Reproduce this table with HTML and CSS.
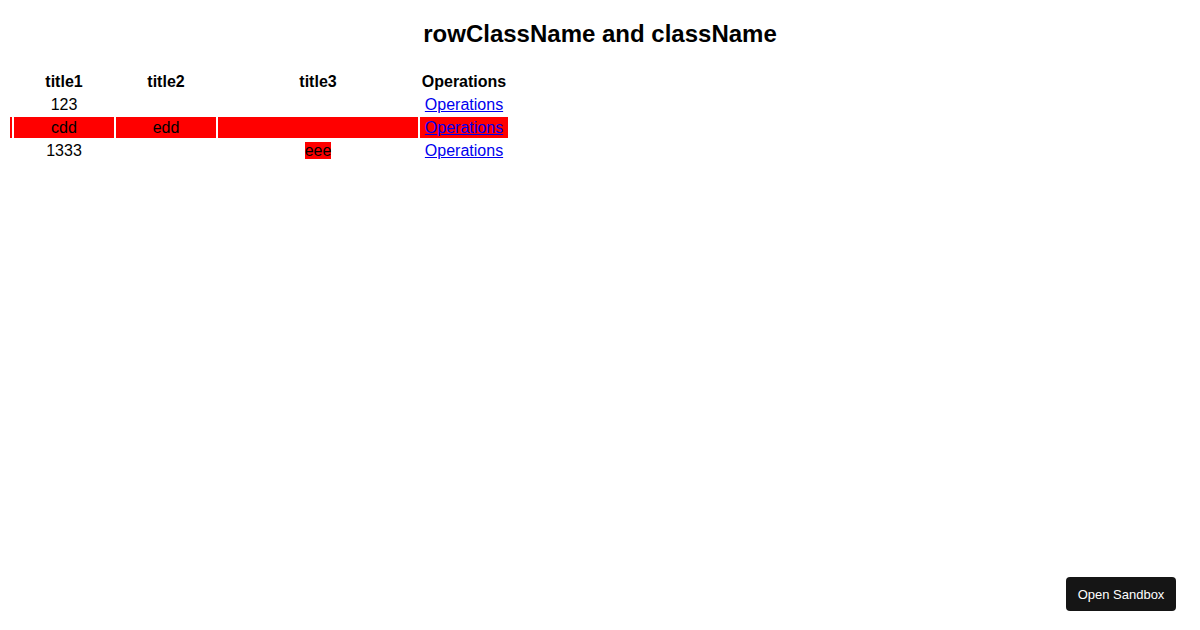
FILE: index.html
```html
<!DOCTYPE html>
<html>
<head>
<meta charset="utf-8">
<link rel="stylesheet" href="styles.css">
</head>
<body>
<div class="page">
  <h2 class="heading">rowClassName and className</h2>
  <table class="tbl">
    <colgroup>
      <col class="c0">
      <col class="c1">
      <col class="c2">
      <col class="c3">
      <col class="c4">
    </colgroup>
    <thead>
      <tr>
        <th></th>
        <th>title1</th>
        <th>title2</th>
        <th>title3</th>
        <th>Operations</th>
      </tr>
    </thead>
    <tbody>
      <tr>
        <td></td>
        <td>123</td>
        <td></td>
        <td></td>
        <td><a href="#">Operations</a></td>
      </tr>
      <tr class="row-red">
        <td></td>
        <td>cdd</td>
        <td>edd</td>
        <td></td>
        <td><a href="#">Operations</a></td>
      </tr>
      <tr>
        <td></td>
        <td>1333</td>
        <td></td>
        <td><span class="red">eee</span></td>
        <td><a href="#">Operations</a></td>
      </tr>
    </tbody>
  </table>
</div>
<button class="sandbox">Open Sandbox</button>
</body>
</html>
```

FILE: styles.css
```css
html, body {
  margin: 0;
  padding: 0;
}
body {
  font-family: "Liberation Sans", Arial, sans-serif;
  font-size: 16px;
  color: #000;
  background: #fff;
}
.page {
  padding: 0 8px;
}
.heading {
  text-align: center;
  font-size: 24px;
  font-weight: bold;
  margin: 20px 0 21px;
}
.tbl {
  border-spacing: 2px;
}
.tbl th,
.tbl td {
  padding: 1px;
  line-height: 19px;
  text-align: center;
}
.c0 { width: 0; }
.c1 { width: 100px; }
.c2 { width: 100px; }
.c3 { width: 200px; }
.c4 { width: 88px; }
.tbl a {
  color: #0000ee;
  text-decoration: underline;
}
.row-red td {
  background: #ff0000;
}
.red {
  background: #ff0000;
}
.sandbox {
  position: fixed;
  right: 24px;
  bottom: 19px;
  width: 110px;
  height: 34px;
  border: none;
  border-radius: 4px;
  background: #151515;
  color: #fff;
  font-family: "Liberation Sans", Arial, sans-serif;
  font-size: 13px;
  padding: 0;
}
```
